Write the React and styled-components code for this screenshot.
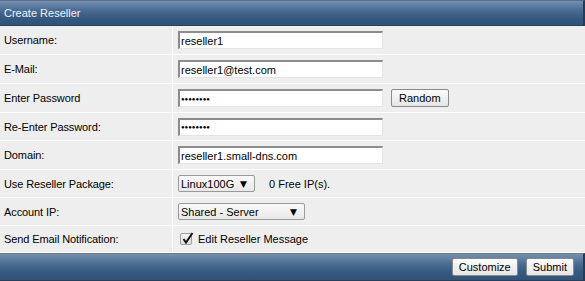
import React from "react";
import styled, { createGlobalStyle } from "styled-components";

const Global = createGlobalStyle`
  html, body { margin: 0; padding: 0; background: #ffffff; }
  body { font-family: "Liberation Sans", Arial, sans-serif; font-size: 11px; color: #000; }
`;

const Panel = styled.div`
  width: 585px;
  display: flex;
  flex-direction: column;
  background: #eeeeee;
`;

const Bar = styled.div`
  height: ${(p) => p.$h}px;
  box-sizing: border-box;
  display: flex;
  align-items: center;
  justify-content: ${(p) => (p.$end ? "flex-end" : "flex-start")};
  gap: 8px;
  padding: 0 9px 0 4px;
  background: linear-gradient(#7690b0 0%, #4d6f96 35%, #36597f 70%, #2f5379 100%);
  border-top: 1px solid ${(p) => (p.$end ? "#777" : "#5a6f86")};
  border-bottom: 1px solid #2a3f55;
  border-right: 2px solid #2a3a4c;
  color: #eef2f7;
`;

const Row = styled.div`
  height: ${(p) => p.$h}px;
  box-sizing: border-box;
  display: grid;
  grid-template-columns: 173px 1fr;
  border-bottom: 1px solid #ffffff;
`;

const Label = styled.div`
  display: flex;
  align-items: center;
  padding-left: 4px;
  border-right: 1px solid #ffffff;
  letter-spacing: -0.1px;
`;

const Value = styled.div`
  display: flex;
  align-items: center;
  gap: ${(p) => p.$gap || 8}px;
  padding-left: 5px;
`;

const TextBox = styled.div`
  width: 205px;
  height: 18px;
  box-sizing: border-box;
  background: #ffffff;
  border-top: 2px solid #8c8c8c;
  border-left: 2px solid #8c8c8c;
  border-right: 1px solid #e4e4e4;
  border-bottom: 1px solid #e4e4e4;
  padding-left: 1px;
  display: flex;
  align-items: center;
  font-size: ${(p) => (p.$dots ? "6px" : "11px")};
  letter-spacing: ${(p) => (p.$dots ? "0px" : "0")};
  overflow: hidden;
  white-space: nowrap;
`;

const Button = styled.div`
  height: 18px;
  box-sizing: border-box;
  padding: 0 ${(p) => p.$pad || 7}px;
  display: flex;
  align-items: center;
  background: linear-gradient(#fbfbfb, #e6e6e6);
  border: 1px solid #8a8a8a;
  border-radius: 2px;
  color: #000;
  font-size: 11px;
`;

const Select = styled.div`
  width: ${(p) => p.$w}px;
  height: 17px;
  box-sizing: border-box;
  display: flex;
  align-items: center;
  justify-content: space-between;
  padding: 0 7px 0 2px;
  background: linear-gradient(#fafafa, #e8e8e8);
  border: 1px solid #9a9a9a;
  border-radius: 2px;
  font-size: 11px;
`;

const Arrow = styled.span`
  font-size: 9px;
  font-family: "DejaVu Sans", sans-serif;
`;

const Check = styled.span`
  width: 12px;
  height: 12px;
  margin-left: 2px;
  box-sizing: border-box;
  border: 1px solid #a0a0a0;
  border-radius: 2px;
  background: linear-gradient(#f4f4f4, #dedede);
  position: relative;
  flex-shrink: 0;
`;

const CheckMark = styled.svg`
  position: absolute;
  left: 0px;
  top: -4px;
`;

const Plain = styled.span``;

function Input({ value, dots }) {
  return <TextBox $dots={dots}>{value}</TextBox>;
}

export default function App() {
  const heights = [29, 29, 29, 28, 29, 28, 28, 27];
  return (
    <>
      <Global />
      <Panel>
        <Bar $h={26}>Create Reseller</Bar>
        <Row $h={heights[0]}>
          <Label>Username:</Label>
          <Value><Input value="reseller1" /></Value>
        </Row>
        <Row $h={heights[1]}>
          <Label>E-Mail:</Label>
          <Value><Input value="reseller1@test.com" /></Value>
        </Row>
        <Row $h={heights[2]}>
          <Label>Enter Password</Label>
          <Value>
            <Input dots value="●●●●●●●●" />
            <Button>Random</Button>
          </Value>
        </Row>
        <Row $h={heights[3]}>
          <Label>Re-Enter Password:</Label>
          <Value><Input dots value="●●●●●●●●" /></Value>
        </Row>
        <Row $h={heights[4]}>
          <Label>Domain:</Label>
          <Value><Input value="reseller1.small-dns.com" /></Value>
        </Row>
        <Row $h={heights[5]}>
          <Label>Use Reseller Package:</Label>
          <Value $gap={14}>
            <Select $w={77}>
              <Plain>Linux100G</Plain>
              <Arrow>▼</Arrow>
            </Select>
            <Plain>0 Free IP(s).</Plain>
          </Value>
        </Row>
        <Row $h={heights[6]}>
          <Label>Account IP:</Label>
          <Value>
            <Select $w={127}>
              <Plain>Shared - Server</Plain>
              <Arrow>▼</Arrow>
            </Select>
          </Value>
        </Row>
        <Row $h={heights[7]}>
          <Label>Send Email Notification:</Label>
          <Value $gap={6}>
            <Check>
              <CheckMark width="14" height="15" viewBox="0 0 14 15">
                <path d="M2.5 9 L5 12.5 L11.5 3" fill="none" stroke="#111" strokeWidth="1.9" />
              </CheckMark>
            </Check>
            <Plain>Edit Reseller Message</Plain>
          </Value>
        </Row>
        <Bar $h={28} $end>
          <Button $pad={6}>Customize</Button>
          <Button $pad={6}>Submit</Button>
        </Bar>
      </Panel>
    </>
  );
}
